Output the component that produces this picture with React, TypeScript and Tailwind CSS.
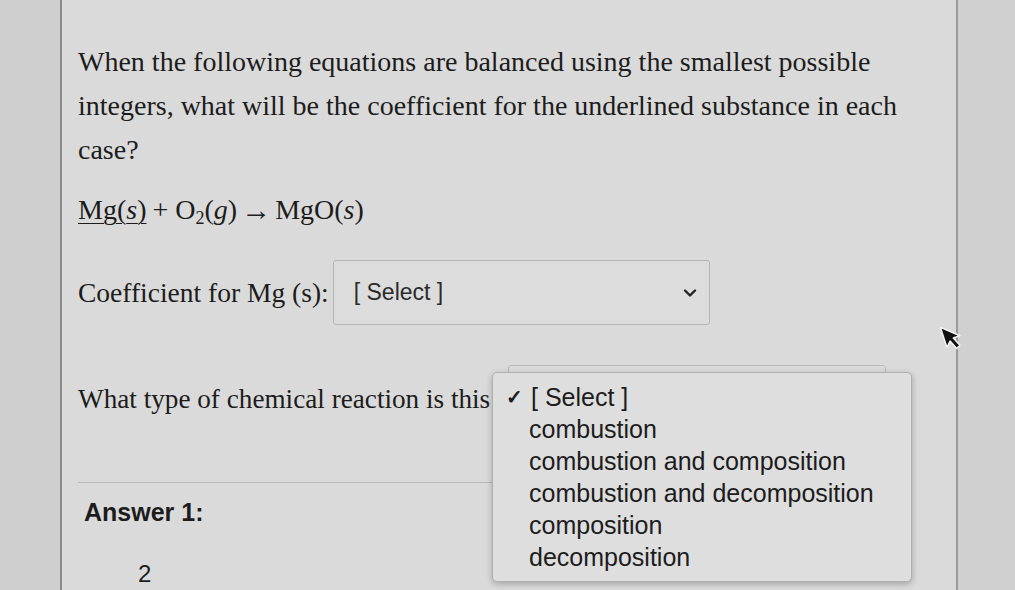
import React from 'react';

const serif = { fontFamily: '"Liberation Serif", "Times New Roman", serif' };
const sans = { fontFamily: '"Liberation Sans", Arial, sans-serif' };

function ChevronDown() {
  return (
    <svg width="14" height="10" viewBox="0 0 14 10" fill="none">
      <path d="M2 2.5l5 5 5-5" stroke="#222" strokeWidth="2.4" strokeLinecap="round" strokeLinejoin="round" />
    </svg>
  );
}

function Cursor() {
  return (
    <svg width="22" height="30" viewBox="0 0 22 30" className="absolute left-[942px] top-[322px] rotate-[-18deg]">
      <path d="M2 2l0 21 5-5 4 9 4-2-4-9 7 0z" fill="#111" stroke="#f4f4f4" strokeWidth="1.5" strokeLinejoin="round" />
    </svg>
  );
}

const options = [
  'combustion',
  'combustion and composition',
  'combustion and decomposition',
  'composition',
  'decomposition',
];

export default function App() {
  return (
    <div className="relative flex h-[590px] w-[1015px] overflow-hidden bg-[#d4d4d4] text-[#1c1c1c]">
      <div className="w-[62px] shrink-0 border-r-2 border-[#8a8a8a] bg-[#cfcfcf]" />
      <div className="w-[896px] shrink-0 border-r-2 border-[#9a9a9a] bg-[#dadada] pl-4 pt-10" style={serif}>
        <p className="w-[840px] text-[28px] leading-[44px]">
          When the following equations are balanced using the smallest possible integers, what will be the coefficient for the underlined substance in each case?
        </p>

        <div className="mt-5 flex h-[36px] items-center text-[28px] leading-[36px]">
          <span className="underline decoration-1 underline-offset-4">Mg(<i>s</i>)</span>
          <span className="ml-[6px]">
            + O<sub className="text-[18px]">2</sub>(<i>g</i>)
          </span>
          <span className="mx-[4px] text-[30px] leading-none">→</span>
          <span>MgO(<i>s</i>)</span>
        </div>

        <div className="mt-8 flex items-center gap-[4px]">
          <span className="text-[27.5px]">Coefficient for Mg (s):</span>
          <div className="flex h-[65px] w-[377px] items-center justify-between rounded-[3px] border border-[#b4b4b4] bg-[#dcdcdc] pl-5 pr-3">
            <span className="text-[23px] text-[#2a2a2a]" style={sans}>[ Select ]</span>
            <ChevronDown />
          </div>
        </div>

        <div className="relative mt-10 flex items-start">
          <span className="mt-[18px] text-[27.2px] leading-[32px]">What type of chemical reaction is this</span>
          <div className="ml-[18px] h-[65px] w-[378px] rounded-[3px] border border-[#b8b8b8] bg-[#dcdcdc]" />
          <div
            className="absolute left-[414px] top-[7px] w-[420px] rounded-[5px] border border-[#b0b0b0] bg-[#dedede] pb-2 pt-[8px] shadow-[0_2px_6px_rgba(0,0,0,0.25)]"
            style={sans}
          >
            <div className="flex items-center text-[25px] leading-[32px]">
              <span className="w-[38px] pl-[13px] text-[20px] font-bold">✓</span>
              <span>[ Select ]</span>
            </div>
            {options.map((o) => (
              <div key={o} className="pl-[36px] text-[25px] leading-[32px]">
                {o}
              </div>
            ))}
          </div>
        </div>

        <div className="mt-[52px] h-px w-[420px] bg-[#b8b8b8]" />
        <div className="mt-[14px] pl-[6px] text-[25px] font-bold leading-[30px]" style={sans}>
          Answer 1:
        </div>
        <div className="mt-[34px] pl-[60px] text-[24px] leading-[26px]" style={sans}>
          2
        </div>
      </div>
      <div className="flex-1 bg-[#d0d0d0]" />
      <Cursor />
    </div>
  );
}
